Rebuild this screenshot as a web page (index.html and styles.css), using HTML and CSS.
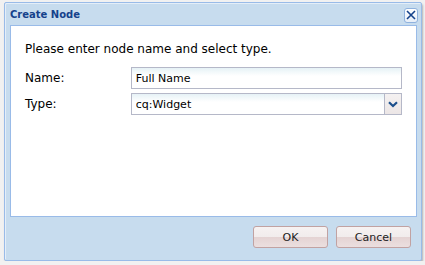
FILE: index.html
```html
<!DOCTYPE html>
<html lang="en">
<head>
  <meta charset="UTF-8">
  <title>Create Node</title>
  <link rel="stylesheet" href="styles.css">
</head>
<body>
  <div class="window">
    <div class="window-header">
      <span class="window-title">Create Node</span>
      <button class="tool-close" title="Close">
        <svg width="10" height="10" viewBox="0 0 10 10">
          <path d="M1 1 L9 9 M9 1 L1 9" stroke="#15428b" stroke-width="1.6" fill="none"/>
        </svg>
      </button>
    </div>

    <div class="window-body">
      <p class="intro">Please enter node name and select type.</p>

      <div class="form-row">
        <label class="form-label" for="node_name">Name:</label>
        <input id="node_name" class="text-field" type="text" value="Full Name">
      </div>

      <div class="form-row">
        <label class="form-label" for="node_type">Type:</label>
        <div class="combo">
          <input id="node_type" class="text-field combo-input" type="text" value="cq:Widget">
          <span class="combo-trigger">
            <svg width="10" height="7" viewBox="0 0 10 7">
              <path d="M1 1.2 L5 5 L9 1.2" stroke="#1c4f8c" stroke-width="2.2" fill="none"/>
            </svg>
          </span>
        </div>
      </div>
    </div>

    <div class="window-footer">
      <button class="btn">OK</button>
      <button class="btn">Cancel</button>
    </div>
  </div>
</body>
</html>
```

FILE: styles.css
```css
:root {
  --page-bg: #f1f1f1;
  --window-bg: #c7dcee;
  --window-border: #99bbe8;
  --title-color: #15428b;
  --field-border: #b5b8c8;
  --text-color: #000000;
}

* {
  margin: 0;
  padding: 0;
  box-sizing: border-box;
}

body {
  font-family: 'DejaVu Sans', Verdana, sans-serif;
  font-size: 11px;
  color: var(--text-color);
  background-color: var(--page-bg);
  padding: 2px 0 0 4px;
}

.window {
  width: 418px;
  height: 259px;
  display: flex;
  flex-direction: column;
  background-color: var(--window-bg);
  border: 1px solid var(--window-border);
  border-radius: 2px;
  box-shadow: inset 1px 1px 0 #e4eef8, 1px 2px 2px rgba(0, 0, 0, 0.25);
}

.window-header {
  height: 22px;
  display: flex;
  align-items: center;
  justify-content: space-between;
  padding: 0 3px 0 5px;
}

.window-title {
  font-weight: 700;
  font-size: 10px;
  color: var(--title-color);
  padding-top: 1px;
}

.tool-close {
  width: 14px;
  height: 15px;
  display: flex;
  align-items: center;
  justify-content: center;
  background: linear-gradient(#ffffff, #e6eef8);
  border: 1px solid #8fb2de;
  border-radius: 3px;
  cursor: pointer;
  margin-top: 2px;
}

.window-body {
  height: 192px;
  margin: 0 4px 0 5px;
  background-color: #ffffff;
  border: 1px solid var(--window-border);
  padding: 15px 14px 0 14px;
}

.intro {
  font-size: 12px;
  line-height: 16px;
  margin-bottom: 10px;
}

.form-row {
  display: flex;
  align-items: center;
  margin-bottom: 4px;
}

.form-label {
  width: 106px;
  font-size: 12px;
}

.text-field {
  width: 272px;
  height: 22px;
  border: 1px solid var(--field-border);
  background: linear-gradient(#e6f2f6, #ffffff 8px);
  font-family: inherit;
  font-size: 11px;
  padding: 0 4px;
  color: #000000;
  outline: none;
}

.combo {
  display: flex;
  width: 272px;
  height: 22px;
}

.combo-input {
  flex: 1;
  width: auto;
  border-right: none;
}

.combo-trigger {
  width: 18px;
  display: flex;
  align-items: center;
  justify-content: center;
  background: linear-gradient(#f4f1f1, #ece6e6);
  border: 1px solid var(--field-border);
}

.window-footer {
  flex: 1;
  display: flex;
  justify-content: flex-end;
  align-items: flex-start;
  gap: 8px;
  padding: 9px 10px 0 0;
}

.btn {
  width: 75px;
  height: 22px;
  font-family: inherit;
  font-size: 11px;
  color: #222222;
  border: 1px solid #c1a2a2;
  border-radius: 3px;
  background: linear-gradient(#f6f2f2 0%, #f1ecec 50%, #e4d3d3 51%, #ebdfdf 100%);
  cursor: pointer;
}
```
